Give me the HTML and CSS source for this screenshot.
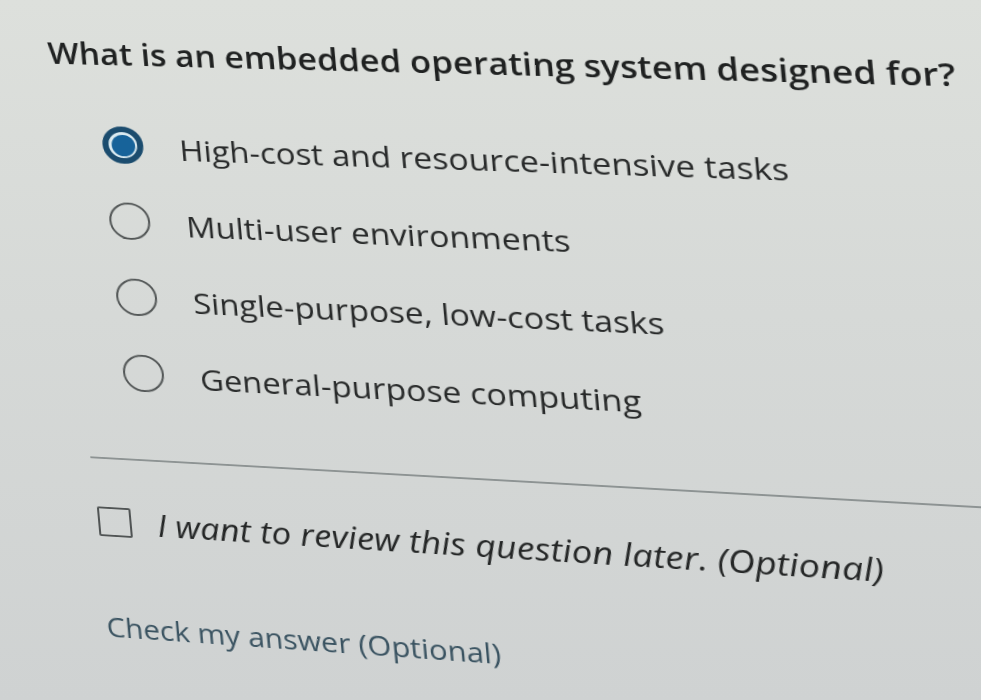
FILE: index.html
```html
<!DOCTYPE html>
<html lang="en">
<head>
<meta charset="utf-8">
<title>Question</title>
<link rel="stylesheet" href="styles.css">
</head>
<body>
<main class="screen">
  <h1 class="question">What is an embedded operating system designed for?</h1>
  <ul class="options">
    <li class="option">
      <span class="radio radio-checked"><span class="radio-dot"></span></span>
      <span class="option-text">High-cost and resource-intensive tasks</span>
    </li>
    <li class="option">
      <span class="radio"></span>
      <span class="option-text">Multi-user environments</span>
    </li>
    <li class="option">
      <span class="radio"></span>
      <span class="option-text">Single-purpose, low-cost tasks</span>
    </li>
    <li class="option">
      <span class="radio"></span>
      <span class="option-text">General-purpose computing</span>
    </li>
  </ul>
  <hr class="divider">
  <label class="review">
    <span class="checkbox"></span>
    <span class="review-text">I want to review this question later. (Optional)</span>
  </label>
  <div class="check">Check my answer (Optional)</div>
</main>
</body>
</html>
```

FILE: styles.css
```css
html, body {
  margin: 0;
  padding: 0;
  overflow: hidden;
  width: 981px;
  height: 700px;
}

body {
  background: linear-gradient(180deg, #dde0dc 0%, #d6d9d7 45%, #cfd2d2 100%);
  font-family: "Open Sans", "Noto Sans", sans-serif;
}

.screen {
  box-sizing: border-box;
  width: 872px;
  padding: 34px 0 0 43px;
  transform-origin: 0 0;
  transform: matrix3d(1, 0.02, 0, -0.00008, 0.083, 0.92, 0, 0, 0, 0, 1, 0, 0, 0, 0, 1);
}

.question {
  margin: 0;
  font-size: 32.5px;
  font-weight: 600;
  line-height: 44px;
  color: #1f2121;
  white-space: nowrap;
}

.options {
  list-style: none;
  margin: 57px 0 0 0;
  padding: 0 0 0 46px;
  display: flex;
  flex-direction: column;
  gap: 38px;
}

.option {
  display: flex;
  align-items: center;
  gap: 35px;
  height: 44px;
}

.radio {
  box-sizing: border-box;
  flex: none;
  width: 40px;
  height: 40px;
  margin-bottom: 6px;
  border: 2px solid #535757;
  border-radius: 50%;
  display: flex;
  align-items: center;
  justify-content: center;
}

.radio-checked {
  border: 6px solid #1b4c6e;
  background: #dbebf1;
}

.radio-dot {
  width: 23px;
  height: 23px;
  border-radius: 50%;
  background: #17639a;
}

.option-text {
  font-size: 31.5px;
  line-height: 44px;
  color: #282a2a;
  white-space: nowrap;
}

.divider {
  margin: 68px 0 0 6px;
  border: 0;
  height: 2px;
  background: #8d9393;
}

.review {
  display: flex;
  align-items: center;
  gap: 25px;
  margin: 46px 0 0 8px;
  height: 44px;
}

.checkbox {
  box-sizing: border-box;
  flex: none;
  width: 33px;
  height: 32px;
  border: 2px solid #505454;
  border-radius: 2px;
}

.review-text {
  font-size: 33.5px;
  font-style: italic;
  line-height: 44px;
  color: #242626;
  white-space: nowrap;
}

.check {
  margin: 72px 0 0 7px;
  font-size: 29px;
  line-height: 40px;
  color: #3a5361;
  white-space: nowrap;
}
```
